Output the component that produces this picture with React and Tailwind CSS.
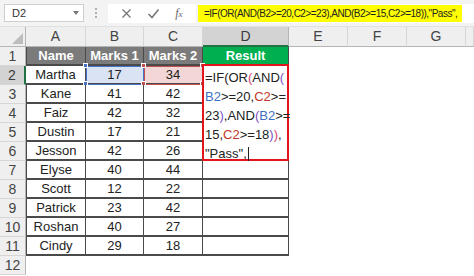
const cols = ["A", "B", "C", "D", "E", "F", "G", ""];

const data = [
  ["Martha", "17", "34"],
  ["Kane", "41", "42"],
  ["Faiz", "42", "32"],
  ["Dustin", "17", "21"],
  ["Jesson", "42", "26"],
  ["Elyse", "40", "44"],
  ["Scott", "12", "22"],
  ["Patrick", "23", "42"],
  ["Roshan", "40", "27"],
  ["Cindy", "29", "18"],
];

const B = "text-[#3f6fc4]";
const R = "text-[#c0392b]";
const P1 = "text-[#d6457a]";
const P2 = "text-[#7b4fc7]";

function Corners({ color }) {
  const sq = `absolute w-[5px] h-[5px] ${color} border border-white`;
  return (
    <>
      <span className={`${sq} -left-[3px] -top-[3px]`} />
      <span className={`${sq} -right-[3px] -top-[3px]`} />
      <span className={`${sq} -left-[3px] -bottom-[3px]`} />
      <span className={`${sq} -right-[3px] -bottom-[3px]`} />
    </>
  );
}

function RowHead({ n, active }) {
  return (
    <div
      className={`flex items-center justify-center text-[14px] border-b border-[#d6d6d6] ${
        active
          ? "bg-[#d3d3d3] text-[#3b3b3b] border-r-2 border-r-[#217346]"
          : "bg-[#efefef] text-[#444] border-r border-r-[#b5b5b5]"
      }`}
    >
      {n}
    </div>
  );
}

function Cell({ children, className = "", first }) {
  return (
    <div
      className={`relative flex items-center justify-center text-[13px] text-[#222] border-r border-b-2 border-[#4a4a4a] ${
        first ? "border-l" : ""
      } ${className}`}
    >
      {children}
    </div>
  );
}

export default function App() {
  return (
    <div
      className="w-[474px] h-[276px] overflow-hidden bg-white"
      style={{ fontFamily: '"Liberation Sans", Arial, sans-serif' }}
    >
      {/* formula bar */}
      <div className="h-[27px] bg-[#f3f3f3] flex items-center border-b border-[#e0e0e0]">
        <div className="ml-[4px] w-[80px] h-[18px] bg-white border border-[#cfcfcf] flex items-center justify-between pl-[7px] pr-[4px] text-[11px] text-[#333]">
          <span>D2</span>
          <span className="w-0 h-0 border-l-[3px] border-r-[3px] border-t-[4px] border-l-transparent border-r-transparent border-t-[#777]" />
        </div>
        <div className="ml-[11px] flex flex-col gap-[2px]">
          <span className="w-[2px] h-[2px] bg-[#b0b0b0]" />
          <span className="w-[2px] h-[2px] bg-[#b0b0b0]" />
          <span className="w-[2px] h-[2px] bg-[#b0b0b0]" />
        </div>
        <div className="ml-[11px] w-[88px] h-[19px] bg-white flex items-center justify-around px-[6px]">
          <svg width="11" height="11" viewBox="0 0 11 11">
            <path d="M1.5 1.5 L9.5 9.5 M9.5 1.5 L1.5 9.5" stroke="#777" strokeWidth="1.3" />
          </svg>
          <svg width="13" height="11" viewBox="0 0 13 11">
            <path d="M1.5 6 L5 9.5 L11.5 1.5" stroke="#777" strokeWidth="1.6" fill="none" />
          </svg>
          <span className="text-[12px] italic text-[#666]" style={{ fontFamily: '"Liberation Serif", serif' }}>
            f<span className="text-[9px]">x</span>
          </span>
        </div>
        <div className="ml-[2px] flex-1 h-[19px] bg-white flex items-center">
          <div className="h-[17px] w-[264px] bg-[#ffff00] flex items-center pl-[6px] text-[10px] tracking-[-0.5px] text-[#222] whitespace-nowrap">
            =IF(OR(AND(B2&gt;=20,C2&gt;=23),AND(B2&gt;=15,C2&gt;=18)),"Pass",
          </div>
        </div>
      </div>

      {/* sheet */}
      <div className="grid grid-cols-[26px_60px_58px_59px_86px_59px_59px_59px_1fr] grid-rows-[20px_repeat(12,19px)]">
        {/* column header */}
        <div className="flex items-end justify-end pr-[2px] pb-[2px] bg-[#efefef] border-r border-b border-[#b5b5b5]">
          <svg width="11" height="11" viewBox="0 0 11 11">
            <path d="M11 0 L11 11 L0 11 Z" fill="#bdbdbd" />
          </svg>
        </div>
        {cols.map((c, i) =>
          c === "D" ? (
            <div key={i} className="flex items-center justify-center text-[14px] text-[#3b3b3b] bg-[#d3d3d3] border-r border-[#b5b5b5] border-b-2 border-b-[#217346]">
              {c}
            </div>
          ) : (
            <div key={i} className="flex items-center justify-center text-[14px] text-[#444] bg-[#efefef] border-r border-[#d6d6d6] border-b border-b-[#b5b5b5]">
              {c}
            </div>
          )
        )}

        {/* row 1 */}
        <RowHead n={1} />
        <Cell first className="bg-[#7b7b7b] text-white font-bold">Name</Cell>
        <Cell className="bg-[#7b7b7b] text-white font-bold">Marks 1</Cell>
        <Cell className="bg-[#7b7b7b] text-white font-bold">Marks 2</Cell>
        <Cell className="bg-[#00b050] text-white font-bold">Result</Cell>
        <div className="col-span-4" />

        {data.map((r, i) => {
          const row = i + 2;
          return [
            <RowHead key={`h${row}`} n={row} active={row === 2} />,
            <Cell key={`a${row}`} first className={row === 2 ? "border-l-0" : ""}>
              {r[0]}
            </Cell>,
            <Cell key={`b${row}`} className={row === 2 ? "bg-[#dae3f3] outline outline-1 outline-[#4472c4] -outline-offset-1" : ""}>
              {r[1]}
              {row === 2 && <Corners color="bg-[#4472c4]" />}
            </Cell>,
            <Cell key={`c${row}`} className={row === 2 ? "bg-[#f2d7d6] outline outline-1 outline-[#c0504d] -outline-offset-1" : ""}>
              {r[2]}
              {row === 2 && <Corners color="bg-[#c0504d]" />}
            </Cell>,
            row === 2 ? (
              <div
                key={`d${row}`}
                className="row-span-5 -mt-[2px] -ml-[1px] border-2 border-[#e0161c] bg-white pl-[1px] pt-[2px] text-[13px] leading-[19px] text-[#222] whitespace-nowrap z-10"
              >
                <div>
                  =IF(OR<span className={P1}>(</span>AND<span className={P2}>(</span>
                </div>
                <div>
                  <span className={B}>B2</span>&gt;=20,<span className={R}>C2</span>&gt;=
                </div>
                <div>
                  23<span className={P2}>)</span>,AND<span className={P2}>(</span>
                  <span className={B}>B2</span>&gt;=
                </div>
                <div>
                  15,<span className={R}>C2</span>&gt;=18<span className={P2}>)</span>
                  <span className={P1}>)</span>,
                </div>
                <div className="flex items-center">
                  "Pass",<span className="ml-[1px] w-[1px] h-[14px] bg-[#222]" />
                </div>
              </div>
            ) : row > 6 ? (
              <Cell key={`d${row}`} />
            ) : null,
            <div key={`e${row}`} className="col-span-4" />,
          ];
        })}

        <RowHead n={12} />
        <div className="col-span-8" />
      </div>
    </div>
  );
}
